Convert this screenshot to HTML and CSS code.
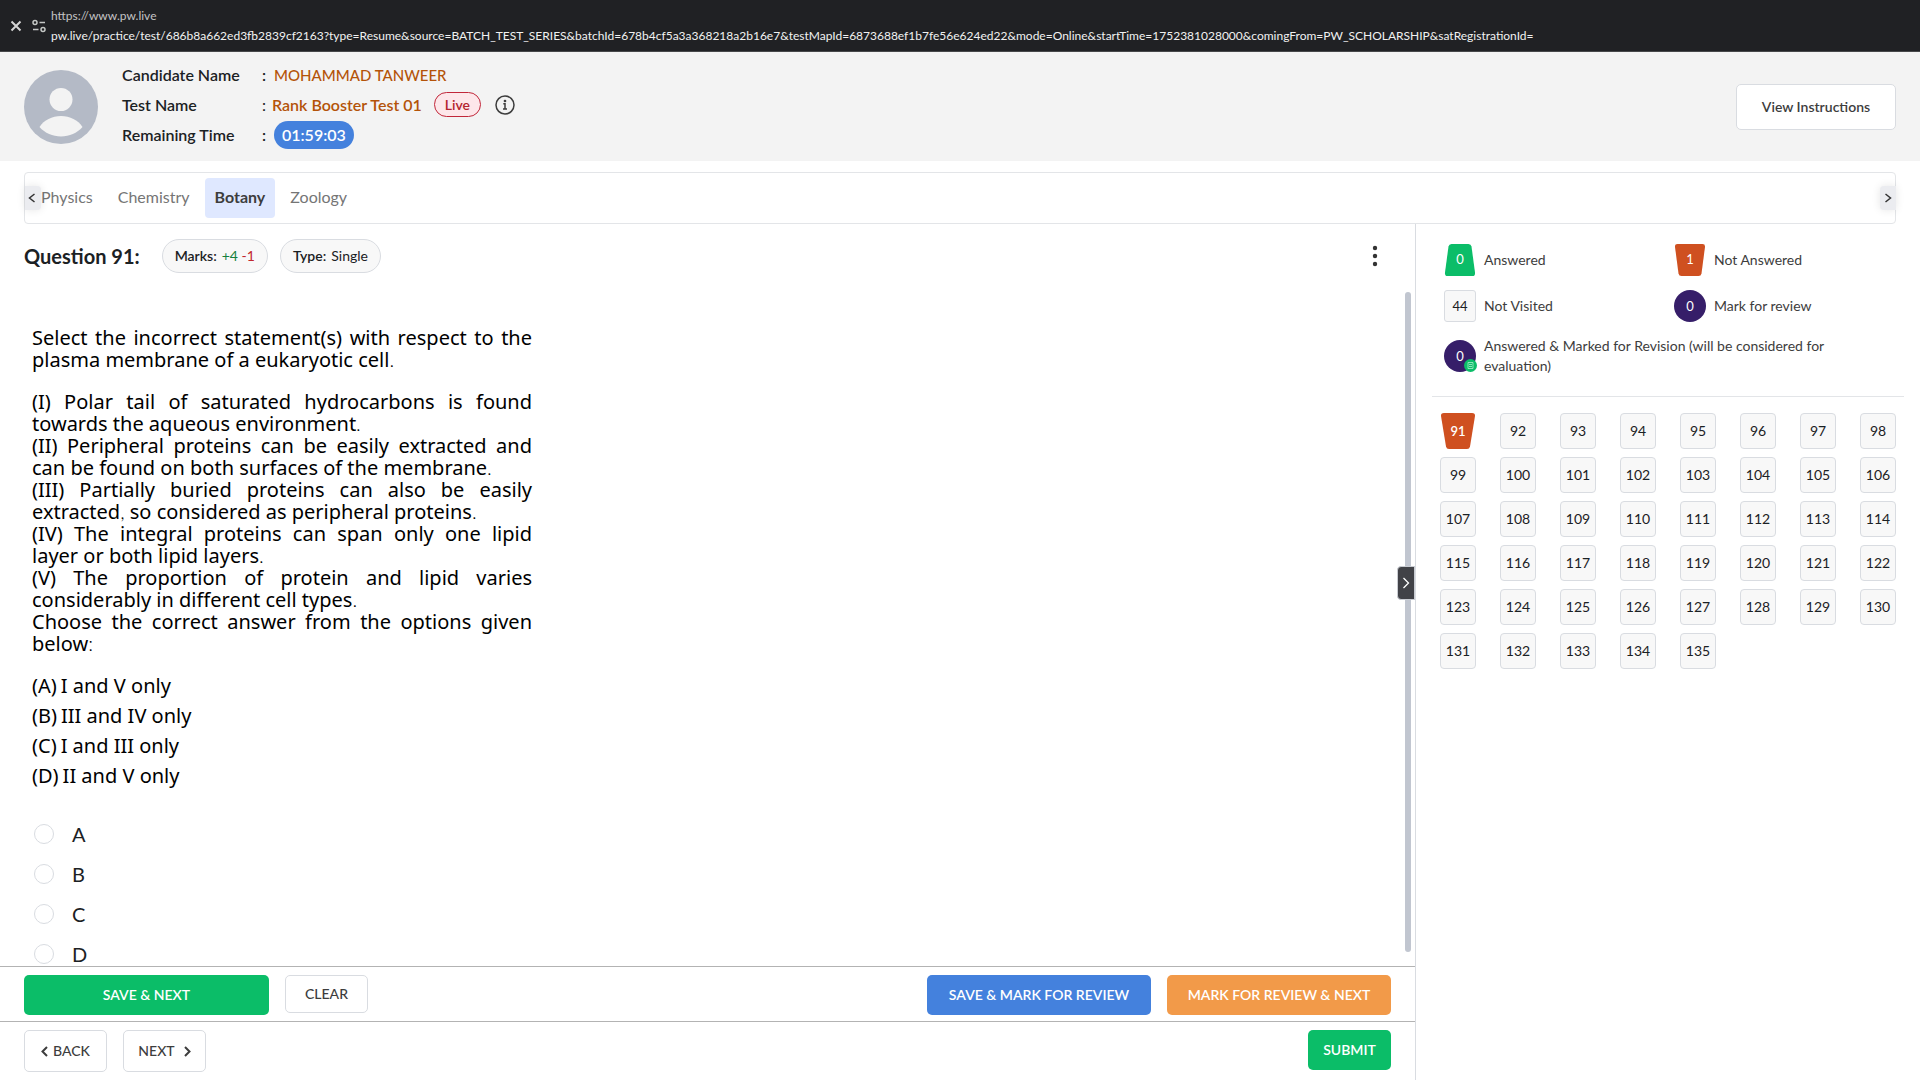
FILE: index.html
```html
<!DOCTYPE html>
<html lang="en">
<head>
<meta charset="utf-8">
<meta name="viewport" content="width=device-width, initial-scale=1">
<title>Rank Booster Test 01</title>
<link rel="stylesheet" href="styles.css">
</head>
<body>
<div class="url-bar">
  <button class="url-close" aria-label="Close"><svg width="12" height="12" viewBox="0 0 12 12"><path d="M1.500 1.500l9 9M10.500 1.500l-9 9" stroke="currentColor" stroke-width="2"/></svg></button>
  <svg class="url-site" width="14" height="14" viewBox="0 0 14 14" fill="none" stroke="currentColor" stroke-width="1.500"><circle cx="3" cy="3.500" r="2"/><path d="M7.500 3.500H13M1 10.500h5.500"/><circle cx="11" cy="10.500" r="2"/></svg>
  <div class="url-lines">
    <div class="url-origin">https://www.pw.live</div>
    <div>pw.live/practice/test/686b8a662ed3fb2839cf2163?type=Resume&amp;source=BATCH_TEST_SERIES&amp;batchId=678b4cf5a3a368218a2b16e7&amp;testMapId=6873688ef1b7fe56e624ed22&amp;mode=Online&amp;startTime=1752381028000&amp;comingFrom=PW_SCHOLARSHIP&amp;satRegistrationId=</div>
  </div>
</div>

<header class="header">
  <svg class="avatar" width="74" height="74" viewBox="0 0 74 74"><circle cx="37" cy="37" r="37" fill="#b4bac6"/><circle cx="37" cy="29.500" r="11.500" fill="#f3f3f3"/><path d="M15.500 57C20 50 28 46 37 46s17 4 21.500 11C53 63 45.500 66.500 37 66.500S21 63 15.500 57z" fill="#f3f3f3"/></svg>
  <dl class="details">
    <div class="detail"><dt>Candidate Name</dt><dd><span class="colon">:</span><span class="value candidate">MOHAMMAD TANWEER</span></dd></div>
    <div class="detail"><dt>Test Name</dt><dd><span class="colon colon-thin">:</span><span class="value">Rank Booster Test 01</span><span class="live">Live</span>
      <button class="info" aria-label="Test info"><svg width="20" height="20" viewBox="0 0 20 20" fill="none" stroke="currentColor" stroke-width="1.500"><circle cx="10" cy="10" r="9"/><path d="M8.300 8.800H10v5M8 14h4"/><circle cx="10" cy="6" r=".6" fill="currentColor"/></svg></button></dd></div>
    <div class="detail"><dt>Remaining Time</dt><dd><span class="colon">:</span><span class="timer">01:59:03</span></dd></div>
  </dl>
  <button class="btn instructions">View Instructions</button>
</header>

<nav class="tabs" aria-label="Subjects">
  <button class="scroll-arrow arrow-left" aria-label="Previous subjects"><svg width="8" height="10" viewBox="0 0 8 10" fill="none" stroke="currentColor" stroke-width="1.500"><path d="M6.500 1L1.500 5l5 4"/></svg></button>
  <button class="tab">Physics</button>
  <button class="tab">Chemistry</button>
  <button class="tab tab-active">Botany</button>
  <button class="tab">Zoology</button>
  <button class="scroll-arrow arrow-right" aria-label="More subjects"><svg width="8" height="10" viewBox="0 0 8 10" fill="none" stroke="currentColor" stroke-width="1.500"><path d="M1.500 1l5 4-5 4"/></svg></button>
</nav>

<div class="workspace">
  <main class="question">
    <div class="question-head">
      <h1>Question 91:</h1>
      <span class="pill"><b>Marks:</b><span><span class="plus">+4</span> <span class="minus">-1</span></span></span>
      <span class="pill"><b>Type:</b><span>Single</span></span>
      <button class="more" aria-label="More options"><svg width="6" height="22" viewBox="0 0 6 22" fill="currentColor"><circle cx="3" cy="3" r="2.200"/><circle cx="3" cy="11" r="2.200"/><circle cx="3" cy="19" r="2.200"/></svg></button>
    </div>
    <div class="question-scroll">
      <div class="question-body">
        <div class="statement">
          <p>Select the incorrect statement(s) with respect to the plasma membrane of a eukaryotic cell<i>.</i></p>
          <div>
            <p>(I) Polar tail of saturated hydrocarbons is found towards the aqueous environment<i>.</i></p>
            <p>(II) Peripheral proteins can be easily extracted and can be found on both surfaces of the membrane<i>.</i></p>
            <p>(III) Partially buried proteins can also be easily extracted<i>,</i> so considered as peripheral proteins<i>.</i></p>
            <p>(IV) The integral proteins can span only one lipid layer or both lipid layers<i>.</i></p>
            <p>(V) The proportion of protein and lipid varies considerably in different cell types<i>.</i></p>
            <p>Choose the correct answer from the options given below<i>:</i></p>
          </div>
          <ul class="choices">
            <li><span>(A)</span>I and V only</li>
            <li><span>(B)</span>III and IV only</li>
            <li><span>(C)</span>I and III only</li>
            <li><span>(D)</span>II and V only</li>
          </ul>
        </div>
        <div class="answers">
          <label><input type="radio" name="answer" value="A">A</label>
          <label><input type="radio" name="answer" value="B">B</label>
          <label><input type="radio" name="answer" value="C">C</label>
          <label><input type="radio" name="answer" value="D">D</label>
        </div>
      </div>
      <div class="scroll-track"><div class="scroll-thumb"></div></div>
    </div>
    <div class="actions">
      <button class="btn solid green wide">SAVE &amp; NEXT</button>
      <button class="btn short">CLEAR</button>
      <span class="spacer"></span>
      <button class="btn solid blue">SAVE &amp; MARK FOR REVIEW</button>
      <button class="btn solid orange">MARK FOR REVIEW &amp; NEXT</button>
    </div>
    <div class="actions">
      <button class="btn tall"><svg width="7" height="11" viewBox="0 0 7 11" fill="none" stroke="currentColor" stroke-width="2"><path d="M6 1L1.500 5.500 6 10"/></svg>BACK</button>
      <button class="btn tall next">NEXT<svg width="7" height="11" viewBox="0 0 7 11" fill="none" stroke="currentColor" stroke-width="2"><path d="M1 1l4.500 4.500L1 10"/></svg></button>
      <span class="spacer"></span>
      <button class="btn solid green submit">SUBMIT</button>
    </div>
    <button class="collapse" aria-label="Collapse panel"><svg width="8" height="12" viewBox="0 0 8 12" fill="none" stroke="currentColor" stroke-width="1.300"><path d="M1.500 1l5 5-5 5"/></svg></button>
  </main>

  <aside class="panel">
    <div class="legend">
      <div class="legend-item"><span class="badge shape"><svg viewBox="0 0 32 32"><path d="M7.500 0h17q2.500 0 3 2.500l3.500 26q.3 3.500-2.500 3.500H3.500Q.7 32 1 28.500l3.500-26Q5 0 7.500 0z" fill="#0bbd68"/></svg><span>0</span></span>Answered</div>
      <div class="legend-item"><span class="badge shape"><svg viewBox="0 0 32 32"><path d="M3.500 0h25q2.800 0 2.500 3l-3.500 26.500q-.5 2.500-3 2.500h-17q-2.500 0-3-2.500L1 3Q.7 0 3.500 0z" fill="#cf5020"/></svg><span>1</span></span>Not Answered</div>
      <div class="legend-item"><span class="badge plain">44</span>Not Visited</div>
      <div class="legend-item"><span class="badge round">0</span>Mark for review</div>
      <div class="legend-item full"><span class="badge round">0<svg class="mark" width="13" height="13" viewBox="0 0 13 13"><circle cx="6.500" cy="6.500" r="6.500" fill="#0bbd68"/><path d="M4 3.500h5v6H4zM5 5.500h3M5 7.500h3" fill="none" stroke="#a9edc9" stroke-width=".8"/></svg></span><span>Answered &amp; Marked for Revision (will be considered for evaluation)</span></div>
    </div>
    <div class="numbers" id="numbers">
      <button class="number current"><svg viewBox="0 0 36 36"><path d="M4 0h28q3.300 0 3 3l-5 30.500q-.5 2.500-3 2.500H9q-2.500 0-3-2.500L1 3Q.7 0 4 0z" fill="#cf5020"/></svg><span>91</span></button>
    </div>
  </aside>
</div>
<script src="numbers.js"></script>
</body>
</html>
```
FILE: styles.css
```css
* { box-sizing: border-box; }
body {
  margin: 0;
  height: 100vh;
  display: flex;
  flex-direction: column;
  overflow: hidden;
  background: #fff;
  color: #1b2124;
  font-family: Lato, "Open Sans", sans-serif;
  font-size: 14px;
  line-height: 20px;
}
button { font: inherit; color: inherit; padding: 0; border: 0; background: none; cursor: pointer; }
svg { display: block; flex: none; }
p, h1, dl, dd, ul { margin: 0; padding: 0; }

/* address strip */
.url-bar {
  display: flex;
  align-items: center;
  height: 52px;
  padding-left: 10px;
  border-bottom: 1px solid #47484a;
  background: #202124;
  color: #f1f1f1;
  font-size: 12px;
  white-space: nowrap;
}
.url-close { color: #d5d5d5; margin-right: 10px; }
.url-site { color: #c4c7c5; margin-right: 5px; }
.url-origin { color: #c4c4c4; }

/* candidate header */
.header {
  display: flex;
  align-items: center;
  height: 109px;
  padding: 0 24px;
  background: #f3f3f3;
}
.details { flex: 1; margin-left: 24px; padding-bottom: 4px; font-size: 16px; font-weight: 600; }
.detail { display: flex; align-items: center; height: 30px; }
.detail dt { width: 140px; }
.detail dd { display: flex; align-items: center; }
.colon { width: 12px; }
.colon-thin { width: 10px; font-weight: 400; }
.value { color: #b45309; }
.candidate { font-size: 15px; font-weight: 500; }
.live {
  margin: 0 14px 0 12px;
  padding: 0 10px;
  border: 1px solid #c1273a;
  border-radius: 13px;
  background: #fde7ea;
  color: #b4232f;
  font-size: 14px;
  line-height: 23px;
}
.info { color: #3d3d3d; }
.timer {
  padding: 0 8px;
  border-radius: 14px;
  background: #4481dd;
  color: #fff;
  line-height: 28px;
}

.btn {
  display: flex;
  align-items: center;
  justify-content: center;
  height: 40px;
  padding: 0 20px;
  border: 1px solid #d9dce1;
  border-radius: 5px;
  background: #fff;
  color: #3d3d3d;
  font-weight: 500;
}
.instructions { width: 160px; height: 46px; font-weight: 600; }

/* subject tabs */
.tabs {
  position: relative;
  display: flex;
  align-items: center;
  gap: 5px;
  height: 52px;
  margin: 11px 24px 0;
  padding-left: 6px;
  border: 1px solid #e3e5e8;
  border-radius: 4px;
  flex: none;
}
.tab {
  height: 40px;
  padding: 0 10px 2px;
  border-radius: 4px;
  color: #757575;
  font-size: 16px;
}
.tab-active { background: #dfe8ff; color: #3d3d3d; font-weight: 700; }
.scroll-arrow {
  position: absolute;
  top: 13px;
  display: flex;
  align-items: center;
  justify-content: center;
  width: 16px;
  height: 24px;
  background: #ebecf0;
  box-shadow: 0 0 8px #0000001a;
  color: #333;
}
.arrow-left { left: 0; padding-right: 2px; border-radius: 0 4px 4px 0; }
.arrow-right { right: -1px; border-radius: 4px 0 0 4px; }

.workspace { display: flex; flex: 1; min-height: 0; }
.question { position: relative; display: flex; flex-direction: column; flex: 1; min-width: 0; }
.question-head { display: flex; align-items: center; height: 67px; padding: 0 37px 3px 24px; flex: none; }
.question-head h1 { margin-right: 22px; font-size: 20px; font-weight: 700; }
.pill {
  display: flex;
  gap: 5px;
  margin-right: 12px;
  padding: 6px 12px;
  border: 1px solid #d9dce1;
  border-radius: 17px;
  background: #f8f8f8;
}
.pill b { font-weight: 600; }
.plus { color: #15803d; }
.minus { color: #c1272d; }
.more { margin-left: auto; color: #333; }

.question-scroll { display: flex; flex: 1; min-height: 0; overflow: hidden; }
.question-body { flex: 1; padding: 36px 32px 0; }
.statement {
  display: flex;
  flex-direction: column;
  gap: 20px;
  max-width: 500px;
  color: #000;
  font-family: "Noto Sans", sans-serif;
  font-size: 20px;
  line-height: 22px;
  text-align: justify;
}
.statement i { font-family: Lato, sans-serif; font-style: normal; font-weight: 300; line-height: 0; }
.choices { list-style: none; display: flex; flex-direction: column; gap: 8px; }
.choices li { display: flex; gap: 4px; }
.answers { display: flex; flex-direction: column; gap: 20px; margin-top: 37px; font-size: 20px; }
.answers label { display: flex; align-items: center; gap: 18px; padding-left: 2px; }
.answers input {
  appearance: none;
  width: 20px;
  height: 20px;
  margin: 0;
  border: 1px solid #d9dce1;
  border-radius: 50%;
}
.scroll-track { width: 10px; padding: 1px 4px 14px 0; }
.scroll-thumb { width: 6px; height: 100%; border-radius: 3px; background: #c1c6d0; }

.actions {
  display: flex;
  align-items: flex-start;
  gap: 16px;
  height: 55px;
  padding: 8px 24px 0;
  border-top: 1px solid #b3b3b3;
  flex: none;
}
.actions + .actions { height: 59px; }
.spacer { flex: 1; }
.solid { border: 0; color: #fff; font-weight: 600; }
.green { background: #0bbd68; }
.blue { background: #4481dd; }
.orange { background: #f29a49; }
.blue, .orange { width: 224px; }
.wide { width: 245px; }
.short, .tall { width: 83px; gap: 5px; padding: 0; }
.short { height: 38px; }
.tall { height: 42px; }
.next { gap: 9px; }
.submit { width: 83px; padding: 0; }
.collapse {
  position: absolute;
  top: 342px;
  right: 0;
  display: flex;
  align-items: center;
  justify-content: center;
  width: 18px;
  height: 34px;
  border: 1px solid #c9ccd2;
  border-radius: 4px 0 0 4px;
  background: #414247;
  color: #fff;
}

/* status panel */
.panel { width: 505px; padding: 20px 16px 0; border-left: 1px solid #d9dce1; }
.legend {
  display: grid;
  grid-template-columns: 1fr 1fr;
  row-gap: 14px;
  padding: 0 0 20px 12px;
  border-bottom: 1px solid #e3e5e8;
  color: #3d3d3d;
}
.legend-item { display: flex; align-items: center; gap: 8px; }
.full { grid-column: 1 / -1; }
.full > span:last-child { max-width: 360px; }
.badge { position: relative; display: grid; place-items: center; width: 32px; height: 32px; flex: none; font-size: 13px; }
.shape, .round { color: #fff; }
.shape svg, .current svg { position: absolute; inset: 0; width: 100%; height: 100%; }
.shape span, .current span { position: relative; padding-bottom: 3px; }
.plain { border: 1px solid #d9dce1; border-radius: 3px; background: #f8f8f8; color: #1b2124; }
.round { border-radius: 50%; background: #361e69; }
.round .mark { position: absolute; right: -1px; bottom: 0; }
.numbers {
  display: grid;
  grid-template-columns: repeat(8, 36px);
  justify-content: space-between;
  row-gap: 8px;
  padding: 16px 8px 0;
}
.number { height: 36px; border: 1px solid #d9dce1; border-radius: 4px; background: #f8f8f8; }
.current { position: relative; border: 0; background: none; color: #fff; font-size: 13px; font-weight: 600; }
```
FILE: numbers.js
```js
const grid = document.getElementById('numbers');
for (let n = 92; n <= 135; n++) {
  const button = document.createElement('button');
  button.className = 'number';
  button.textContent = n;
  grid.append(button);
}
```
